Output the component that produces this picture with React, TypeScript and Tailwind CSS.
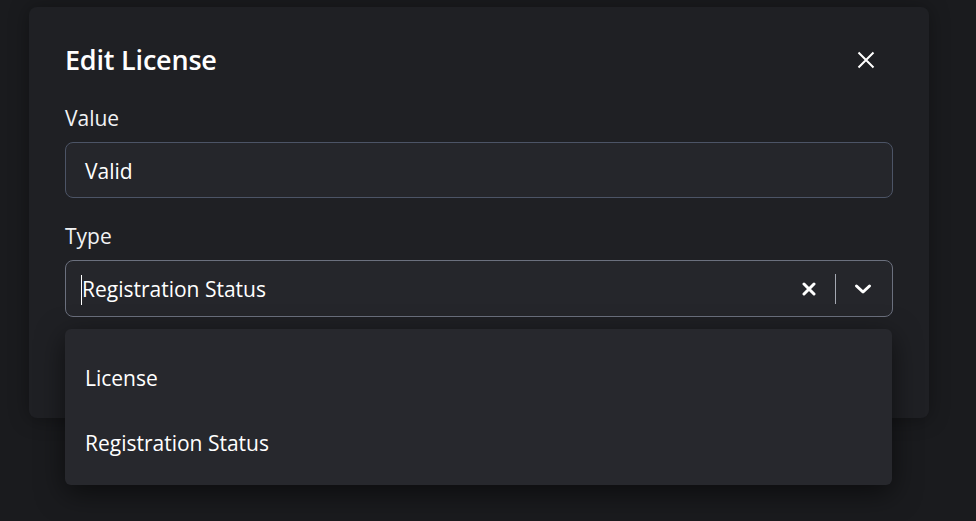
import React from 'react';

const font = { fontFamily: '"Open Sans", "Liberation Sans", sans-serif' };

const App = () => {
  return (
    <div className="w-[976px] h-[521px] bg-[#1a1b1e] overflow-hidden" style={font}>
      <div className="relative ml-[29px] mt-[7px] w-[900px] h-[411px] rounded-lg bg-[#1f2024] shadow-[0_1px_20px_rgba(0,0,0,0.35)] px-9 pt-[30px]">
        <div className="flex items-center justify-between h-[46px]">
          <h2 className="text-[27px] font-semibold text-white tracking-[-0.2px]">Edit License</h2>
          <button className="mr-[18px] text-white">
            <svg width="18" height="18" viewBox="0 0 18 18" fill="none" stroke="currentColor" strokeWidth="2">
              <path d="M1.5 1.5l15 15M16.5 1.5l-15 15" />
            </svg>
          </button>
        </div>

        <label className="block mt-[20px] text-[21px] text-[#f1f2f4] leading-[30px]">Value</label>
        <div className="mt-[9px] h-[56px] rounded-lg border-[1.5px] border-[#4c5466] bg-[#25262b] px-[19px] pt-[3px] flex items-center text-[21px] text-white">
          Valid
        </div>

        <label className="block mt-[23px] text-[21px] text-[#f1f2f4] leading-[30px]">Type</label>
        <div className="mt-[9px] h-[57px] rounded-lg border-[1.5px] border-[#6b707e] bg-[#25262b] flex items-center">
          <div className="flex-1 flex items-center pl-[15px] pt-[2px] text-[21px] text-white">
            <span className="w-px h-[30px] bg-white" />
            Registration Status
          </div>
          <button className="w-[34px] h-full flex items-center justify-center text-white">
            <svg width="14" height="14" viewBox="0 0 14 14" fill="none" stroke="currentColor" strokeWidth="3" strokeLinecap="round">
              <path d="M2 2l10 10M12 2L2 12" />
            </svg>
          </button>
          <span className="w-px h-[30px] bg-[#a4a8b2] ml-[9px]" />
          <button className="w-[56px] h-full flex items-center justify-center text-white pr-[2px]">
            <svg width="18" height="12" viewBox="0 0 18 12" fill="none" stroke="currentColor" strokeWidth="3" strokeLinecap="round" strokeLinejoin="round">
              <path d="M2.5 3l6.5 6 6.5-6" />
            </svg>
          </button>
        </div>

        <div className="absolute left-9 top-[322px] w-[827px] h-[156px] rounded-md bg-[#27282d] shadow-[0_8px_28px_rgba(0,0,0,0.55)] py-[17px] z-10">
          <div className="h-[65px] flex items-center px-[20px] text-[21px] text-white">License</div>
          <div className="h-[65px] flex items-center px-[20px] text-[21px] text-white">Registration Status</div>
        </div>
      </div>
    </div>
  );
};

export default App;
